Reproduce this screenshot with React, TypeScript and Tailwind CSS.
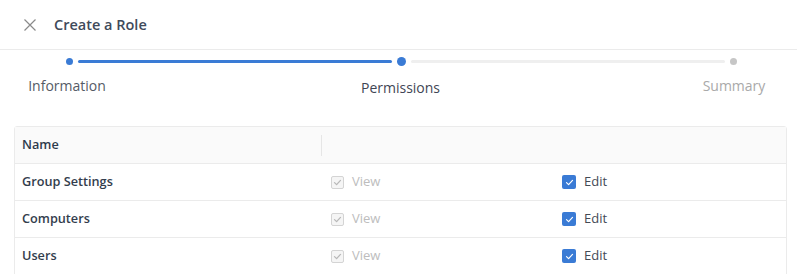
import React from "react";

const font = { fontFamily: '"Open Sans", "Noto Sans", sans-serif' };

function Check({ disabled }: { disabled?: boolean }) {
  if (disabled) {
    return (
      <span className="flex h-[13px] w-[13px] items-center justify-center rounded-[2px] border border-[#d4d4d4] bg-[#f5f5f5]">
        <svg width="9" height="9" viewBox="0 0 9 9" fill="none">
          <polyline points="1.5,4.6 3.6,6.6 7.5,2.4" stroke="#b8b8b8" strokeWidth="1.3" strokeLinecap="round" strokeLinejoin="round" />
        </svg>
      </span>
    );
  }
  return (
    <span className="flex h-[14px] w-[14px] items-center justify-center rounded-[2px] bg-[#3a7bd5]">
      <svg width="9" height="9" viewBox="0 0 9 9" fill="none">
        <polyline points="1.5,4.6 3.6,6.6 7.5,2.4" stroke="#ffffff" strokeWidth="1.2" strokeLinecap="round" strokeLinejoin="round" />
      </svg>
    </span>
  );
}

const rows = ["Group Settings", "Computers", "Users"];

export default function App() {
  return (
    <div className="h-[274px] w-[797px] overflow-hidden bg-white" style={font}>
      {/* Header */}
      <div className="flex h-[50px] items-center border-b border-[#ebebeb] pl-[24px]">
        <svg width="12" height="12" viewBox="0 0 12 12" fill="none">
          <path d="M0.5 0.5L11.5 11.5M11.5 0.5L0.5 11.5" stroke="#8a8a8a" strokeWidth="1.2" />
        </svg>
        <span className="ml-[18px] text-[14.5px] font-semibold text-[#404a5a]">Create a Role</span>
      </div>

      {/* Stepper */}
      <div className="pt-[6px]">
        <div className="flex h-[10px] items-center pl-[66px] pr-[60px]">
          <span className="h-[7px] w-[7px] rounded-full bg-[#3a7bd5]" />
          <span className="mx-[5px] h-[3px] flex-1 rounded-full bg-[#3a7bd5]" />
          <span className="h-[9px] w-[9px] rounded-full bg-[#3a7bd5]" />
          <span className="mx-[5px] h-[3px] flex-1 rounded-full bg-[#efefef]" />
          <span className="h-[7px] w-[7px] rounded-full bg-[#c6c6c6]" />
        </div>
        <div className="mt-[10px] flex h-[20px] items-start justify-between pl-[7px] pr-[3px] text-[14px] leading-[20px]">
          <span className="w-[120px] text-center text-[#555b66]">Information</span>
          <span className="mt-[2px] text-center text-[#3f4654]">Permissions</span>
          <span className="w-[120px] text-center text-[#a9a9a9]">Summary</span>
        </div>
      </div>

      {/* Table */}
      <div className="ml-[14px] mr-[10px] mt-[30px] rounded-t-[3px] border border-[#ebebeb] text-[12.7px]">
        <div className="grid h-[37px] grid-cols-[307px_240px_1fr] items-center border-b border-[#ebebeb] bg-[#fafafa]">
          <div className="flex h-full items-center justify-between pl-[7px]">
            <span className="font-semibold text-[#2e3a4c]">Name</span>
            <span className="h-[21px] w-px bg-[#e6e6e6]" />
          </div>
          <div />
          <div />
        </div>
        {rows.map((r) => (
          <div key={r} className="grid h-[37px] grid-cols-[307px_240px_1fr] items-center border-b border-[#ebebeb]">
            <div className="pl-[7px] font-semibold text-[#333d4d]">{r}</div>
            <div className="flex items-center pl-[9px]">
              <Check disabled />
              <span className="ml-[8px] text-[13px] text-[#bdbdbd]">View</span>
            </div>
            <div className="flex items-center">
              <Check />
              <span className="ml-[8px] text-[13px] text-[#444a55]">Edit</span>
            </div>
          </div>
        ))}
      </div>
    </div>
  );
}
